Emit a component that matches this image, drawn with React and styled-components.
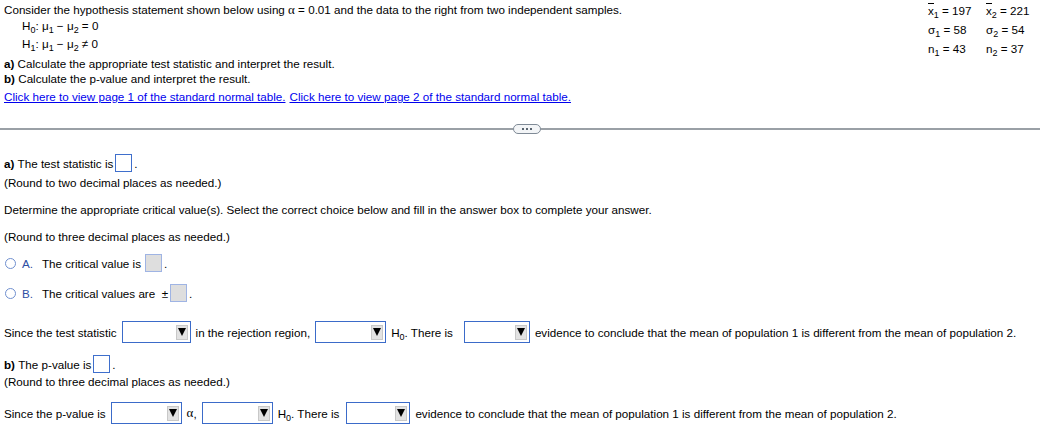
import React from "react";
import styled, { createGlobalStyle } from "styled-components";

const Global = createGlobalStyle`
  html, body { margin: 0; padding: 0; background: #fff; overflow: hidden; }
  body { font-family: "Liberation Sans", Arial, sans-serif; font-size: 11.65px; color: #000; }
`;

const Page = styled.div`
  width: 1040px;
  padding-top: 2px;
`;

const Header = styled.div`
  display: flex;
  padding-left: 4px;
`;

const Problem = styled.div`
  flex: 1;
`;

const Line = styled.div`
  line-height: 15px;
  margin-top: ${(p) => p.$mt || 0}px;
  white-space: nowrap;
`;

const HypLine = styled.div`
  height: 18px;
  line-height: 18px;
  padding-left: 18px;
  white-space: nowrap;
`;

const Sub = styled.sub`
  font-size: 9px;
  vertical-align: -3px;
  line-height: 0;
`;

const Alpha = styled.span`
  font-family: "Liberation Serif", "Times New Roman", serif;
  font-size: 13px;
  line-height: 0;
`;

const Links = styled.div`
  line-height: 15px;
  margin-top: 3px;
  display: flex;
  gap: 4px;
`;

const Link = styled.a`
  color: #0000ee;
  text-decoration: underline;
  cursor: pointer;
`;

const Data = styled.div`
  width: 112px;
  display: grid;
  grid-template-columns: 58px auto;
  grid-auto-rows: 19px;
  align-items: center;
  margin-top: -1px;
`;

const Cell = styled.div`
  white-space: nowrap;
`;

const XBar = styled.span`
  position: relative;
  &::before {
    content: "";
    position: absolute;
    left: 0;
    right: 0;
    top: -1px;
    border-top: 1px solid #000;
  }
`;

const Divider = styled.div`
  display: flex;
  align-items: center;
  width: 1054px;
  margin-top: 20px;
  height: 10px;
`;

const Rule = styled.div`
  flex: 1;
  height: 0;
  border-top: 2px solid #9aa0a6;
`;

const Handle = styled.div`
  width: 26px;
  height: 8px;
  border: 1px solid #7f8a96;
  border-radius: 5px;
  background: #f3f5f7;
  display: flex;
  align-items: center;
  justify-content: center;
  gap: 2px;
`;

const Dot = styled.span`
  width: 2px;
  height: 2px;
  background: #5a6570;
`;

const Body = styled.div`
  padding-left: 4px;
  margin-top: 20px;
`;

const Row = styled.div`
  display: flex;
  align-items: center;
  height: ${(p) => p.$h || 18}px;
  margin-top: ${(p) => p.$mt || 0}px;
  white-space: nowrap;
`;

const Box = styled.span`
  display: inline-block;
  width: 15px;
  height: 16px;
  border: 1px solid ${(p) => (p.$disabled ? "#9fb4e4" : "#3f6fcc")};
  background: ${(p) => (p.$disabled ? "#dedede" : "#fff")};
  margin: 0 2px 0 ${(p) => p.$ml ?? 3}px;
`;

const Radio = styled.span`
  width: 9px;
  height: 9px;
  border: 1.5px solid #6f8fcf;
  border-radius: 50%;
  margin-left: 1px;
  margin-right: 6px;
`;

const OptLabel = styled.span`
  color: #2d4fa3;
  width: 20px;
`;

const Select = styled.span`
  display: inline-flex;
  align-items: center;
  justify-content: flex-end;
  box-sizing: border-box;
  width: ${(p) => p.$w || 69}px;
  height: 22px;
  border: 1px solid #3b6bc9;
  background: #fff;
  margin: 0 5px;
  padding-right: 2px;
`;

const Arrow = styled.span`
  width: 12px;
  height: 15px;
  background: #e2e2e2;
  border: 1px solid #c8c8c8;
  box-sizing: border-box;
  display: flex;
  align-items: center;
  justify-content: center;
  &::after {
    content: "";
    border-left: 4px solid transparent;
    border-right: 4px solid transparent;
    border-top: 8px solid #000;
  }
`;

const Bold = styled.b`
  font-weight: bold;
`;

const ThereIs = styled.span`
  padding-right: ${(p) => p.$pad || 0}px;
`;

export default function App() {
  return (
    <>
      <Global />
      <Page>
        <Header>
          <Problem>
            <Line>
              Consider the hypothesis statement shown below using <Alpha>α</Alpha> = 0.01 and the data to the right from two independent samples.
            </Line>
            <HypLine>
              H<Sub>0</Sub>: μ<Sub>1</Sub> − μ<Sub>2</Sub> = 0
            </HypLine>
            <HypLine>
              H<Sub>1</Sub>: μ<Sub>1</Sub> − μ<Sub>2</Sub> ≠ 0
            </HypLine>
            <Line $mt={3}>
              <Bold>a)</Bold> Calculate the appropriate test statistic and interpret the result.
            </Line>
            <Line>
              <Bold>b)</Bold> Calculate the p-value and interpret the result.
            </Line>
            <Links>
              <Link>Click here to view page 1 of the standard normal table.</Link>
              <Link>Click here to view page 2 of the standard normal table.</Link>
            </Links>
          </Problem>
          <Data>
            <Cell>
              <XBar>x</XBar>
              <Sub>1</Sub> = 197
            </Cell>
            <Cell>
              <XBar>x</XBar>
              <Sub>2</Sub> = 221
            </Cell>
            <Cell>
              σ<Sub>1</Sub> = 58
            </Cell>
            <Cell>
              σ<Sub>2</Sub> = 54
            </Cell>
            <Cell>
              n<Sub>1</Sub> = 43
            </Cell>
            <Cell>
              n<Sub>2</Sub> = 37
            </Cell>
          </Data>
        </Header>

        <Divider>
          <Rule />
          <Handle>
            <Dot />
            <Dot />
            <Dot />
          </Handle>
          <Rule />
        </Divider>

        <Body>
          <Row>
            <Bold>a)</Bold>&nbsp;The test statistic is
            <Box $ml={2} />.
          </Row>
          <Line $mt={3}>(Round to two decimal places as needed.)</Line>
          <Line $mt={12}>
            Determine the appropriate critical value(s). Select the correct choice below and fill in the answer box to complete your answer.
          </Line>
          <Line $mt={12}>(Round to three decimal places as needed.)</Line>
          <Row $mt={10}>
            <Radio />
            <OptLabel>A.</OptLabel>
            The critical value is
            <Box $disabled $ml={4} />.
          </Row>
          <Row $mt={12}>
            <Radio />
            <OptLabel>B.</OptLabel>
            The critical values are&nbsp;&nbsp;±
            <Box $disabled $ml={2} />.
          </Row>
          <Row $h={22} $mt={19}>
            Since the test statistic
            <Select>
              <Arrow />
            </Select>
            in the rejection region,
            <Select $w={71}>
              <Arrow />
            </Select>
            <ThereIs $pad={6}>
              H<Sub>0</Sub>. There is
            </ThereIs>
            <Select $w={66}>
              <Arrow />
            </Select>
            evidence to conclude that the mean of population 1 is different from the mean of population 2.
          </Row>
          <Row $mt={12}>
            <Bold>b)</Bold>&nbsp;The p-value is
            <Box $ml={2} />.
          </Row>
          <Line $mt={1}>(Round to three decimal places as needed.)</Line>
          <Row $h={22} $mt={13}>
            Since the p-value is
            <Select $w={71}>
              <Arrow />
            </Select>
            <Alpha>α</Alpha>,
            <Select $w={71}>
              <Arrow />
            </Select>
            <ThereIs $pad={2}>
              H<Sub>0</Sub>. There is
            </ThereIs>
            <Select $w={64}>
              <Arrow />
            </Select>
            evidence to conclude that the mean of population 1 is different from the mean of population 2.
          </Row>
        </Body>
      </Page>
    </>
  );
}
